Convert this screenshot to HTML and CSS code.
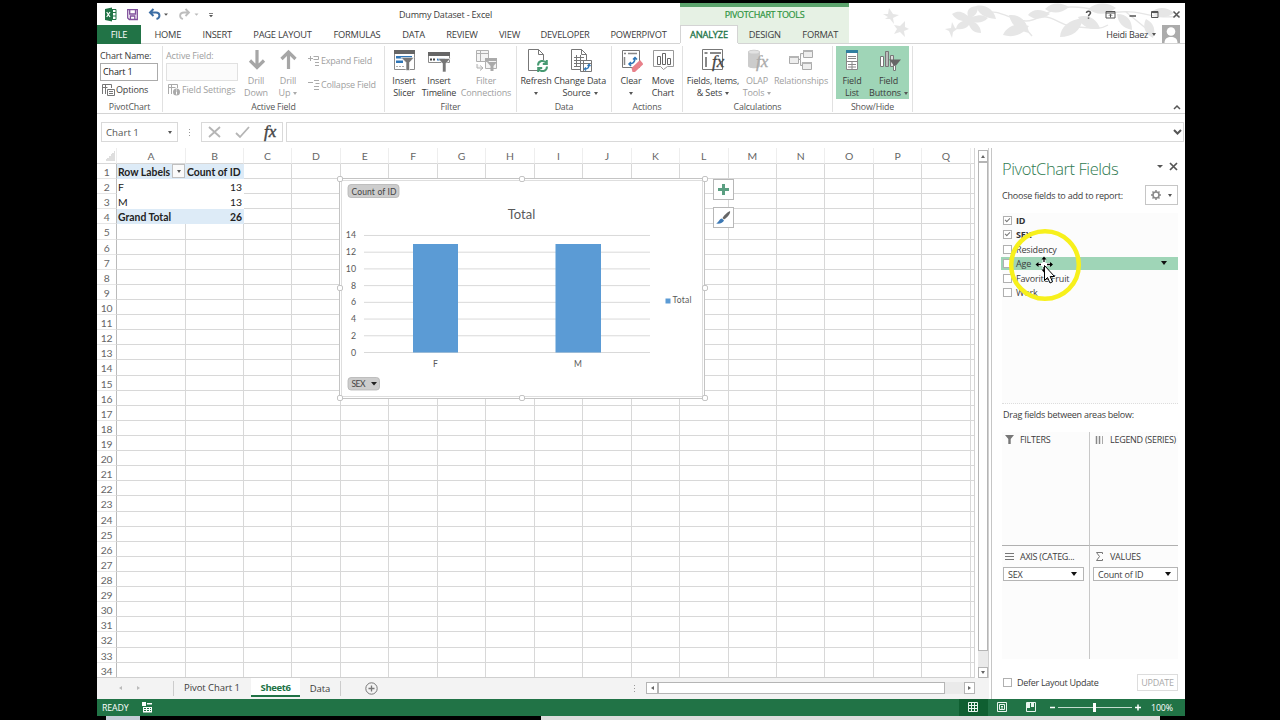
FILE: index.html
```html
<!DOCTYPE html>
<html lang="en">
    <head>
        <meta charset="utf-8">
        <title>Dummy Dataset - Excel</title>
        <link rel="stylesheet" href="styles.css">
    </head>
    <body>
        <div class="window">
            <div class="titlebar">
                <svg class="branches" width="310" height="39" viewBox="875 3 310 39">
                    <g fill="none" stroke="#e6e6e6" stroke-width="1.4">
                        <path d="M984 13c14-5 28 8 42 8s20-13 44-14 30 8 50 5 30 8 60 4M1040 17c14-2 22 10 36 10s22 4 32-2M1020 22l12 14M1126 12l22 18"/>
                    </g>
                    <g fill="#e6e6e6">
                        <path d="M883 14l5 0 1-6 4 6 6 1-6 3 1 6-4-5-5 0 3-2zM894 25l6 1 5-5 0 6 4 2-5 2 1 6-5-5-6 2 3-5zM945 29l6-1 1-6 3 6 2 1-4 3-1 6-3-7z"/>
                        <path d="M952 14c8-5 13 0 16 2-2-6 2-10 10-10 0 6-2 9-6 11 8-3 12-2 16 1-5 5-10 5-14 4 4 2 7 6 7 11-8 0-10-4-12-8-3 4-8 5-13 4 1-5 4-7 7-8-6-1-9-4-11-7z"/>
                        <path d="M976 6c10-2 18 4 20 13-11-1-17-4-20-13zM1009 15c10-1 18 5 20 18-11-2-18-8-20-18zM1003 35c4-9 14-13 26-9-6 9-16 12-26 9zM1028 15c5-7 14-6 22-1-8 6-16 6-22 1z"/>
                        <path d="M1045 9c7-7 16-7 24-2-8 7-17 7-24 2zM1060 37c1-11 9-17 23-19-2 13-11 19-23 19zM1078 17c9-3 18 1 22 11-11 2-18-1-22-11zM1088 9c9-7 19-7 28-1-9 7-19 8-28 1zM1117 14c10 0 15 6 15 16-9-2-14-7-15-16zM1146 19c8 4 10 11 7 19-8-4-11-11-7-19zM1151 12c8-6 16-5 23 1-8 6-16 5-23-1z"/>
                    </g>
                </svg>
                <div class="quick">
                    <svg width="130" height="16" viewBox="101 6 130 16">
                        <path fill="#fff" stroke="#217346" d="M109 9.5h7v10h-7M112.5 9v11M109 12.5h7M109 16h7"/>
                        <path fill="#217346" d="M105 9l7-1.5v14L105 20z"/>
                        <path fill="none" stroke="#fff" stroke-width="1.2" d="M106.7 12l3.3 5M110 12l-3.3 5"/>
                        <path fill="none" stroke="#80509c" stroke-width="1.3" d="M127.7 9.7h9.6v9.8h-8l-1.6-1.6zM129.7 10v4h5.8v-4M130.4 19v-3h4.4v3"/>
                        <path fill="none" stroke="#3c6ea5" stroke-width="2" d="M150.5 12.500h5.500c4.500 0 4.500 5.500.5 6.500M153.500 9l-3.500 3.500 3.500 3.500"/>
                        <path fill="none" stroke="#bdbdbd" stroke-width="1.8" d="M188.500 12.500h-4.500c-5 0-5 5.500-1 6.500M185.500 9l3.500 3.500-3.500 3.500"/>
                        <path fill="#555" d="M164 13.500h4l-2 2.200zM209 15h4l-2 2.200zM209 13h4v.8h-4z"/>
                        <path fill="#bbb" d="M194.500 13.500h4l-2 2.200z"/>
                    </svg>
                </div>
                <div class="doc-title">Dummy Dataset - Excel</div>
                <div class="context-title">PIVOTCHART TOOLS</div>
                <svg class="controls" width="102" height="14" viewBox="1083 8 102 14">
                    <g fill="none" stroke="#555">
                        <path stroke-width="1.5" d="M1086.500 13c0-2.500 4-2.500 4 0 0 1.300-2 1.500-2 3.200M1088.500 17.500v1.300"/>
                        <path d="M1106 11.500h9v6.500h-9zM1106 13h9M1110.500 17.500v-3M1109 15.700l1.500-1.500 1.500 1.500"/>
                        <path stroke-width="1.500" d="M1129.500 16h6.500"/>
                        <path d="M1151.500 11.500h6.500v6h-6.500zM1151.500 12.500h6.500"/>
                        <path stroke-width="1.500" d="M1173.500 11.500l6 6M1179.500 11.500l-6 6"/>
                    </g>
                </svg>
            </div>

            <div class="tabs">
                <div class="tab file">FILE</div>
                <div class="tab">HOME</div>
                <div class="tab">INSERT</div>
                <div class="tab">PAGE LAYOUT</div>
                <div class="tab">FORMULAS</div>
                <div class="tab">DATA</div>
                <div class="tab">REVIEW</div>
                <div class="tab">VIEW</div>
                <div class="tab">DEVELOPER</div>
                <div class="tab">POWERPIVOT</div>
                <div class="tab context active">ANALYZE</div>
                <div class="tab context">DESIGN</div>
                <div class="tab context">FORMAT</div>
                <div class="user">
                    <span>Heidi Baez</span>
                    <i class="caret"></i>
                    <svg width="18" height="18" viewBox="0 0 18 18">
                        <path fill="#ababab" d="M0 0h18v18H0z"/>
                        <circle cx="9" cy="6.500" r="4.300" fill="#fff"/>
                        <path fill="#fff" d="M2.500 18c0-4.500 3-6 6.500-6s6.500 1.500 6.500 6z"/>
                    </svg>
                </div>
            </div>

            <div class="ribbon">
                <div class="group pivotchart">
                    <div class="stack">
                        <span>Chart Name:</span>
                        <span class="field">Chart 1</span>
                        <span class="small-btn">
                            <svg width="13" height="12" viewBox="0 0 13 12"><path fill="none" stroke="#777" d="M.5 10V.5h9V4M.5 3.500h5M3.500.5V10M5.500 5.500h7v6h-7zM7 7.500h4M7 9.500h4"/></svg>
                            Options
                        </span>
                    </div>
                    <div class="group-name">PivotChart</div>
                </div>

                <div class="group activefield">
                    <div class="buttons">
                        <div class="stack off">
                            <span>Active Field:</span>
                            <span class="field"></span>
                            <span class="small-btn">
                                <svg width="13" height="12" viewBox="0 0 13 12"><path fill="none" stroke="#aaa" d="M.5 10V.5h9V4M.5 3.500h7M3.500.5V10"/><circle cx="8.500" cy="8" r="3.500" fill="#aaa"/><path stroke="#fff" d="M8.500 5.500v1M8.500 7.500v3"/></svg>
                                Field Settings
                            </span>
                        </div>
                        <div class="btn off">
                            <svg width="24" height="24" viewBox="0 0 24 24"><path fill="none" stroke="#a6a6a6" stroke-width="3.2" d="M13 2v17M6 12.500l7 7 7-7"/></svg>
                            <span>Drill</span><span>Down</span>
                        </div>
                        <div class="btn off">
                            <svg width="24" height="24" viewBox="0 0 24 24"><path fill="none" stroke="#a6a6a6" stroke-width="3.2" d="M12.500 21V4M5.500 11l7-7 7 7"/></svg>
                            <span>Drill</span><span>Up<i class="caret"></i></span>
                        </div>
                        <div class="lines off">
                            <span><svg width="12" height="12" viewBox="0 0 12 12"><path fill="none" stroke="#aaa" d="M0 3.500h5M2.500 1v5M5.500 1.500h5v3h-5M7 7.500h4M7 10.500h4"/></svg>Expand Field</span>
                            <span><svg width="12" height="12" viewBox="0 0 12 12"><path fill="none" stroke="#aaa" d="M0 3.500h5M6 1.500h5M7.500 4.500h4M6 7.500h5M6 10.500h5"/></svg>Collapse Field</span>
                        </div>
                    </div>
                    <div class="group-name">Active Field</div>
                </div>

                <div class="group filter">
                    <div class="buttons">
                        <div class="btn">
                            <svg width="24" height="24" viewBox="0 0 24 24"><path fill="#fff" stroke="#8a8a8a" d="M2.500 2.500h20v19h-20z"/><path fill="#666" d="M2 2h21v4H2z"/><path fill="#2e75b6" d="M4 8h16v2.500H4zM4 12.500h7V15H4z"/><path stroke="#aaa" stroke-dasharray="2 1" d="M4 18.500h8"/><path fill="#777" stroke="#fff" stroke-width=".6" d="M9 9.500h13l-4.500 5v8h-3.500v-8z"/></svg>
                            <span>Insert</span><span>Slicer</span>
                        </div>
                        <div class="btn">
                            <svg width="24" height="24" viewBox="0 0 24 24"><path fill="#fff" stroke="#8a8a8a" d="M1.500 4.500h21v10h-21z"/><path fill="#666" d="M1 4h22v4H1z"/><path stroke="#444" stroke-width="2" stroke-dasharray="2 1" d="M3 11.500h6"/><path stroke="#2e75b6" stroke-width="2" d="M10 11.500h8"/><path fill="#777" stroke="#fff" stroke-width=".6" d="M11 10.500h12.500l-4.500 5V24h-3.500v-8.500z"/></svg>
                            <span>Insert</span><span>Timeline</span>
                        </div>
                        <div class="btn off">
                            <svg width="24" height="24" viewBox="0 0 24 24"><path fill="#f4f4f4" stroke="#b0b0b0" d="M2.500 2.500h12v11h-12zM2.500 5.500h12M6.500 2.500v11M3 16v4h6M6 17.500l3 2.500-3 2.500M11.500 10.500h11v10h-11z"/><path fill="#aaa" d="M11 10h12v3H11zM13 14h10l-3.500 4v5h-3v-5z"/></svg>
                            <span>Filter</span><span>Connections</span>
                        </div>
                    </div>
                    <div class="group-name">Filter</div>
                </div>

                <div class="group data">
                    <div class="buttons">
                        <div class="btn">
                            <svg width="24" height="24" viewBox="0 0 24 24"><path fill="#fff" stroke="#777" d="M4.500 1.500h10l5 5v16h-15zM14.500 1.500v5h5"/><circle cx="18.500" cy="18" r="6" fill="#fff"/><path fill="none" stroke="#479a72" stroke-width="2" d="M14 17.500c0-5 6-6 8.500-2.500M22.800 12v4h-4M23 18.500c0 5-6 6-8.500 2.500M14.200 24v-4h4"/></svg>
                            <span>Refresh</span><span><i class="caret"></i></span>
                        </div>
                        <div class="btn">
                            <svg width="24" height="24" viewBox="0 0 24 24"><path fill="#fff" stroke="#777" d="M3.500 1.500h10l5 5v15h-15zM13.500 1.500v5h5M6 9.500h10M6 12.500h10M6 15.500h10M6 18.500h10M8.500 7v12M12.500 7v12"/><path fill="#fff" stroke="#777" d="M12.500 12.500h11v11h-11zM12.500 15.500h11M15.500 12.500v11"/><path fill="none" stroke="#2e75b6" stroke-width="1.300" d="M17 21c3 0 4-1 4-4M19.500 18l1.500-1.500 1.500 1.500M18 19.500L16.500 21l1.500 1.500"/></svg>
                            <span>Change Data</span><span>Source<i class="caret"></i></span>
                        </div>
                    </div>
                    <div class="group-name">Data</div>
                </div>

                <div class="group actions">
                    <div class="buttons">
                        <div class="btn">
                            <svg width="24" height="24" viewBox="0 0 24 24"><path fill="#fff" stroke="#777" d="M3.500 2.500h17v17h-17z"/><path fill="none" stroke="#888" stroke-width="1.500" d="M5 5.500h2M9 5.500h9M5.500 9v8"/><path fill="none" stroke="#2e75b6" stroke-width="1.500" d="M10 16c4 0 6-2 6-6M14 11.500l2-2 2 2M12 14l-2 2 2 2"/><path fill="#e8808a" d="M12.500 20l8.500-8 3.500 4-8.500 8h-2.500z"/></svg>
                            <span>Clear</span><span><i class="caret"></i></span>
                        </div>
                        <div class="btn">
                            <svg width="24" height="24" viewBox="0 0 24 24"><path fill="#fff" stroke="#999" d="M2.500 2.500h20v16h-6l-4 3-3-3h-7z"/><path fill="#fff" stroke="#666" d="M6.500 8.500h3v8h-3zM11.500 5.500h3v11h-3zM16.500 10.500h3v6h-3z"/></svg>
                            <span>Move</span><span>Chart</span>
                        </div>
                    </div>
                    <div class="group-name">Actions</div>
                </div>

                <div class="group calculations">
                    <div class="buttons">
                        <div class="btn">
                            <svg width="24" height="24" viewBox="0 0 24 24"><path fill="#fff" stroke="#777" d="M1.500 1.500h20v20h-20z"/><path fill="none" stroke="#888" stroke-width="2" d="M3.500 5h3M9 5h11M5 9v10"/><text class="fx" x="11" y="19" font-size="17">fx</text></svg>
                            <span>Fields, Items,</span><span>&amp; Sets<i class="caret"></i></span>
                        </div>
                        <div class="btn off">
                            <svg width="24" height="24" viewBox="0 0 24 24"><path fill="#ccc" d="M3 4c0-3 12-3 12 0v14c0 3-12 3-12 0z"/><ellipse cx="9" cy="4" rx="5" ry="1.500" fill="#e2e2e2"/><text class="fx" x="11" y="19" font-size="17">fx</text></svg>
                            <span>OLAP</span><span>Tools<i class="caret"></i></span>
                        </div>
                        <div class="btn off">
                            <svg width="24" height="24" viewBox="0 0 24 24"><path fill="#eee" stroke="#aaa" d="M.5 8.500h9v7h-9zM14.500 2.500h9v7h-9zM13.500 14.500h9v7h-9zM9.500 11.500h2v-6h3M11.500 11.500v6h2"/><path fill="#b5b5b5" d="M0 8h10v2H0zM14 2h10v2H14zM13 14h10v2H13z"/></svg>
                            <span>Relationships</span>
                        </div>
                    </div>
                    <div class="group-name">Calculations</div>
                </div>

                <div class="group showhide">
                    <div class="buttons">
                        <div class="btn on">
                            <svg width="24" height="24" viewBox="0 0 24 24"><path fill="#fff" stroke="#888" d="M6.500 2.500h11v19h-11zM8 8.500h8M8 10.500h8M6.500 13.500h11M12 14v7M8 16.500h8M8 19h8"/><path fill="#2f7f9f" d="M6 2h12v3H6z"/></svg>
                            <span>Field</span><span>List</span>
                        </div>
                        <div class="btn on">
                            <svg width="24" height="24" viewBox="0 0 24 24"><path fill="#fff" stroke="#777" d="M3.500 8.500h3v10h-3z"/><path fill="#bbb" stroke="#777" d="M8.500 3.500h3v15h-3z"/><path fill="#ddd" stroke="#777" d="M13.500 7.500h3v11h-3z"/><path fill="#666" d="M12 11.500h12l-5 6h-2z"/><path fill="#fff" stroke="#777" d="M16.500 17.500h2v5h-2z"/></svg>
                            <span>Field</span><span>Buttons<i class="caret"></i></span>
                        </div>
                    </div>
                    <div class="group-name">Show/Hide</div>
                </div>
                <svg class="collapse" width="8" height="6" viewBox="0 0 8 6"><path fill="none" stroke="#555" stroke-width="1.500" d="M1 5l3-3 3 3"/></svg>
            </div>

            <div class="formula-bar">
                <div class="name-box"><span>Chart 1</span><i class="caret"></i></div>
                <div class="dots"><i></i><i></i><i></i></div>
                <div class="fx-box">
                    <svg width="44" height="18" viewBox="6 0 44 18">
                        <path fill="none" stroke="#b5b5b5" stroke-width="1.800" d="M7 4l11 10M18 4L7 14M34 10l4 4 9-10"/>
                    </svg>
                    <span class="fx-btn">fx</span>
                </div>
                <div class="formula-input">
                    <svg width="9" height="6" viewBox="0 0 9 6"><path fill="none" stroke="#555" stroke-width="2" d="M1 1l3.500 3.500L8 1"/></svg>
                </div>
            </div>

            <div class="main">
                <div class="sheet-side">
                    <div class="sheet">
                        <div class="cells" id="cells"></div>
                        <svg class="chart" width="371" height="227" viewBox="337 175 371 227">
                            <path fill="#fff" stroke="#c4c4c4" d="M339.500 178.500h365v220h-365z"/>
                            <path fill="none" stroke="#dedede" d="M341.500 180.500h361v216h-361z"/>
                            <g class="chip"><rect x="348" y="184.500" width="51" height="13" rx="3"/><rect x="348" y="377.500" width="31.500" height="12.500" rx="3"/></g>
                            <text class="chart-text dark" x="351.500" y="194.500" textLength="45">Count of ID</text>
                            <text class="chart-text dark" x="351.500" y="387" textLength="14">SEX</text>
                            <path fill="#222" d="M371 382h6l-3 3.500z"/>
                            <text class="chart-title" x="521.500" y="219">Total</text>
                            <g id="plot"></g>
                            <path fill="#5b9bd5" d="M665.500 298.500h5v5h-5z"/>
                            <text class="chart-text" x="672.500" y="303" textLength="19">Total</text>
                            <g class="handles" id="handles"></g>
                        </svg>
                        <div class="chart-btns">
                            <div><svg width="13" height="13" viewBox="0 0 13 13"><path stroke="#5b9f82" stroke-width="3" d="M6.500 1v11M1 6.500h11"/></svg></div>
                            <div><svg width="15" height="15" viewBox="0 0 15 15"><path fill="#666" d="M14 1c1 2-3 7-6 8.500L6.500 8C8 5 12 2 14 1z"/><path fill="#3c78b4" d="M6 8.500l2 2C7 13 4 14 0 13.500 3 12.500 3 9 6 8.500z"/></svg></div>
                        </div>
                    </div>
                    <div class="vscroll"><span class="arrow up"></span><span class="thumb"></span><span class="track"></span><span class="arrow down"></span></div>
                    <div class="sheet-tabs">
                        <div class="nav"><i class="left"></i><i class="right"></i></div>
                        <div class="sheet-tab">Pivot Chart 1</div>
                        <div class="sheet-tab current">Sheet6</div>
                        <div class="sheet-tab last">Data</div>
                        <svg class="add" width="13" height="13" viewBox="0 0 13 13"><circle cx="6.500" cy="6.500" r="5.700" fill="none" stroke="#777"/><path stroke="#777" stroke-width="1.300" d="M6.500 3.500v6M3.500 6.500h6"/></svg>
                        <div class="dots"><i></i><i></i><i></i></div>
                        <div class="hscroll"><span class="arrow left"></span><span class="thumb"></span><span class="track"></span><span class="arrow right"></span></div>
                    </div>
                </div>

                <div class="panel">
                    <div class="panel-head">
                        <h2>PivotChart Fields</h2>
                        <i class="caret"></i>
                        <svg width="9" height="9" viewBox="0 0 9 9"><path stroke="#555" stroke-width="1.700" d="M1 1l7 7M8 1L1 8"/></svg>
                    </div>
                    <div class="choose">
                        <span>Choose fields to add to report:</span>
                        <div class="tools">
                            <svg width="10" height="10" viewBox="0 0 10 10"><circle cx="5" cy="5" r="3" fill="none" stroke="#888" stroke-width="1.500"/><path stroke="#888" stroke-width="1.500" d="M5 0v2M5 8v2M0 5h2M8 5h2M1.500 1.500l1.200 1.200M7.300 7.300l1.200 1.200M8.500 1.500L7.300 2.700M2.700 7.300L1.500 8.500"/></svg>
                            <i class="caret"></i>
                        </div>
                    </div>
                    <div class="fields">
                        <div class="item checked"><i class="box"></i>ID</div>
                        <div class="item checked"><i class="box"></i>SEX</div>
                        <div class="item"><i class="box"></i>Residency</div>
                        <div class="item hover"><i class="box"></i>Age<i class="caret"></i></div>
                        <div class="item"><i class="box"></i>Favorite Fruit</div>
                        <div class="item"><i class="box"></i>Work</div>
                    </div>
                    <div class="drag-label">Drag fields between areas below:</div>
                    <div class="areas">
                        <div class="area">
                            <h3><svg width="9" height="9" viewBox="0 0 9 9"><path fill="#777" d="M0 0h9L5.700 4v5H3.300V4z"/></svg>FILTERS</h3>
                        </div>
                        <div class="area">
                            <h3><svg width="9" height="9" viewBox="0 0 9 9"><path stroke="#888" stroke-width="1.500" d="M1.500 1v8M4.500 1v8"/><path stroke="#aaa" d="M7.500 1v8"/></svg>LEGEND (SERIES)</h3>
                        </div>
                        <div class="area">
                            <h3><svg width="9" height="9" viewBox="0 0 9 9"><path stroke="#777" d="M0 1.500h9M0 4.500h9M0 7.500h9"/></svg>AXIS (CATEG...</h3>
                            <div class="value">SEX<i class="caret"></i></div>
                        </div>
                        <div class="area">
                            <h3><svg width="9" height="9" viewBox="0 0 9 9"><path fill="none" stroke="#777" d="M7.500 2V.5h-6l3 4-3 4h6V7"/></svg>VALUES</h3>
                            <div class="value">Count of ID<i class="caret"></i></div>
                        </div>
                    </div>
                    <div class="defer">
                        <i class="box"></i><span>Defer Layout Update</span>
                        <div class="update">UPDATE</div>
                    </div>
                </div>
            </div>

            <div class="status">
                <span class="ready">READY</span>
                <svg width="11" height="11" viewBox="0 0 11 11"><path fill="#fff" d="M0 0h4v4H0zM5 1h5v1.500H5zM1 5h9v5.500H1z"/><path stroke="#217346" stroke-dasharray="2 1" d="M2 6.500h7M2 8.500h7"/></svg>
                <div class="views">
                    <div class="view selected"><svg width="11" height="11" viewBox="0 0 11 11"><path fill="none" stroke="#e8f5ee" d="M.5.5h9v9h-9zM3.500.5v9M6.500.5v9M.5 3.500h9M.5 6.500h9"/></svg></div>
                    <div class="view"><svg width="11" height="11" viewBox="0 0 11 11"><path fill="none" stroke="#e8f5ee" d="M.5.5h9v9h-9zM2.500 2.500h5v5h-5zM4 4.500h2M4 6h2"/></svg></div>
                    <div class="view"><svg width="11" height="11" viewBox="0 0 11 11"><path fill="none" stroke="#e8f5ee" d="M.5.500h9v9h-9z"/><path fill="#e8f5ee" d="M1 1h3v5H1zM5 1h3v4H5z"/></svg></div>
                </div>
                <svg class="zoom" width="91" height="11" viewBox="0 0 91 11"><path stroke="#fff" stroke-width="1.500" d="M0 5.500h5M85 5.500h6M88 2.500v6"/><path stroke="#c4dccf" d="M8 5.500h74"/><path fill="#fff" d="M43 1h3v9h-3z"/></svg>
                <span class="percent">100%</span>
            </div>
        </div>
        <div class="behind"><i></i><i></i></div>

        <svg class="pointer" width="76" height="76" viewBox="0 0 76 76">
            <circle cx="38" cy="38" r="33.800" fill="none" stroke="#f7f01c" stroke-width="4.500"/>
            <path fill="#fff" stroke="#fff" stroke-width="3" d="M37 32v11M31 37.500h13"/>
            <path fill="none" stroke="#000" stroke-width="1.300" d="M37 31v4M37 40v4M30 37.500h4M40 37.500h5"/>
            <path fill="#000" d="M34.500 32.500h5L37 29.500zM31.500 35v5l-3-2.500zM43 35v5l3-2.500zM34.500 42.500h5l-2.500 3z"/>
            <path fill="#fff" stroke="#000" d="M37.500 38.500v15l3-3 2.500 5.500 2.500-1.200-2.300-5.300h4.300z"/>
        </svg>
        <script src="script.js"></script>
    </body>
</html>
```
FILE: styles.css
```css
body {
    margin: 0;
    width: 1280px;
    height: 720px;
    overflow: hidden;
    background: #000;
    color: #3c3c3c;
    font-family: "Open Sans", "Noto Sans", sans-serif;
    font-size: 9px;
    letter-spacing: -0.15px;
    white-space: nowrap;
}

svg {
    display: block;
    flex: none;
    letter-spacing: 0;
}

h2, h3 {
    margin: 0;
    font-weight: normal;
}

.window {
    display: flex;
    flex-direction: column;
    width: 1088px;
    height: 713px;
    margin: 3px 0 0 97px;
    background: #fff;
    position: relative;
}

.caret {
    display: inline-block;
    border: 2.5px solid transparent;
    border-top: 3px solid #555;
    border-bottom: 0;
    margin-left: 3px;
    vertical-align: middle;
    flex: none;
}

.off .caret {
    border-top-color: #aaa;
}

.off {
    color: #a0a0a0;
}

.fx {
    font-family: "Liberation Serif", serif;
    font-style: italic;
    fill: #444;
    stroke: #444;
    stroke-width: 0.3px;
}

.off .fx {
    fill: #aaa;
    stroke: #aaa;
}

/* title bar */
.titlebar {
    display: grid;
    grid-template-columns: 583px 169px 1fr;
    height: 22px;
}

.titlebar > * {
    grid-row: 1;
}

.branches {
    position: absolute;
    top: 0;
    right: 0;
}

.quick {
    grid-column: 1;
    padding: 3px 0 0 4px;
}

.doc-title {
    grid-column: 1;
    padding: 6px 0 0 302px;
    line-height: 12px;
    letter-spacing: -0.18px;
}

.context-title {
    grid-column: 2;
    border-top: 4px solid #5ba36c;
    background: #e6f1e4;
    color: #2e9440;
    text-align: center;
    line-height: 16px;
    letter-spacing: -0.32px;
    -webkit-text-stroke: 0.2px #2e9440;
}

.controls {
    grid-column: 3;
    justify-self: end;
    margin-top: 5px;
    position: relative;
}

/* ribbon tabs */
.tabs {
    display: grid;
    grid-template-columns: 44px 53.5px 45.5px 85px 64px 49px 48px 47px 64px 83px 58px 53.5px 57.5px 1fr;
    height: 19px;
    font-size: 9.300px;
    letter-spacing: -0.22px;
}

.tab {
    display: flex;
    align-items: center;
    justify-content: center;
    border-bottom: 1px solid #d4d4d4;
    height: 18px;
}

.tab.file {
    background: #217346;
    color: #fff;
    border-color: #217346;
}

.tab.context {
    background: #e6f1e4;
}

.tab.active {
    background: #fff;
    color: #217346;
    box-shadow: inset 1px 1px #d4d4d4, inset -1px 0 #d4d4d4;
    border-color: #fff;
    -webkit-text-stroke: 0.3px #217346;
}

.user {
    display: flex;
    align-items: center;
    justify-content: flex-end;
    height: 18px;
    padding-right: 5px;
    border-bottom: 1px solid #d4d4d4;
    font-size: 9px;
    letter-spacing: -0.25px;
    position: relative;
}

.user .caret {
    margin: 0 6px 0 4px;
}

/* ribbon */
.ribbon {
    display: grid;
    grid-template-columns: 66px 222px 132px 95px 71px 150px 80px 1fr;
    height: 69px;
    border-bottom: 1px solid #d4d4d4;
}

.group {
    display: flex;
    flex-direction: column;
    justify-content: space-between;
    border-right: 1px solid #e1e1e1;
    margin: 2px 0 1px;
}

.group-name {
    text-align: center;
    line-height: 11px;
    height: 10px;
    color: #555;
    font-size: 8.800px;
}

.buttons {
    display: grid;
    height: 52px;
}

.filter .buttons { grid-template-columns: 34px 36px 58px; padding-left: 2px; }
.data .buttons { grid-template-columns: 34px 54px; padding-left: 2px; }
.actions .buttons { grid-template-columns: 32px 32px; padding-left: 3px; }
.calculations .buttons { grid-template-columns: 56px 32px 56px; padding-left: 2px; }
.showhide .buttons { grid-template-columns: 32px 41px; padding-left: 3px; }
.activefield .buttons { grid-template-columns: 77px 32px 32px 1fr; }

.btn {
    display: flex;
    flex-direction: column;
    align-items: center;
    padding-top: 2px;
    line-height: 12px;
}

.btn svg {
    margin-bottom: 3px;
}

.btn span {
    height: 12px;
}

.data .btn:first-child .caret,
.actions .btn:first-child .caret {
    margin-left: 0;
}

.btn.on {
    background: #9fd5b7;
}

.stack {
    display: flex;
    flex-direction: column;
    padding: 3px 4px 0 3px;
    line-height: 13px;
}

.field {
    box-sizing: border-box;
    height: 18px;
    border: 1px solid #ababab;
    margin: 1px 0;
    padding-left: 2px;
    line-height: 16px;
    color: #222;
}

.off .field {
    border-color: #e1e1e1;
    background: #fbfbfb;
    margin-right: -2px;
}

.small-btn {
    display: flex;
    align-items: center;
    gap: 1px;
    padding-left: 2px;
    height: 15px;
    letter-spacing: -0.15px;
}

.lines {
    display: flex;
    flex-direction: column;
    gap: 12px;
    padding: 9px 0 0 4px;
    line-height: 12px;
    letter-spacing: -0.2px;
}

.lines span {
    display: flex;
    gap: 1px;
}

.collapse {
    align-self: end;
    justify-self: end;
    margin: 0 4px 3px 0;
}

/* formula bar */
.formula-bar {
    display: grid;
    grid-template-columns: 77px 23px 83px 1fr;
    height: 20px;
    padding: 8px 1px 6px 4px;
}

.name-box, .fx-box, .formula-input {
    border: 1px solid #d9d9d9;
    height: 18px;
}

.name-box {
    display: flex;
    align-items: center;
    justify-content: space-between;
    padding: 0 5px 0 4px;
    font-size: 9.700px;
    line-height: 17px;
    letter-spacing: 0;
    color: #555;
}

.fx-box {
    display: flex;
    margin-right: 1px;
    padding-left: 6px;
}

.fx-btn {
    font-family: "Liberation Serif", serif;
    font-style: italic;
    font-size: 17px;
    line-height: 17px;
    letter-spacing: 0;
    color: #444;
    -webkit-text-stroke: 0.4px #444;
    margin-left: 12px;
}

.formula-input {
    margin-left: 2px;
    display: flex;
    align-items: center;
    justify-content: flex-end;
    padding-right: 1px;
}

.dots {
    display: flex;
    flex-direction: column;
    gap: 2px;
    align-items: center;
    justify-content: center;
}

.dots i {
    width: 1px;
    height: 1px;
    background: #999;
}

/* worksheet */
.main {
    display: grid;
    grid-template-columns: 894px 1fr;
    height: 551px;
}

.sheet-side {
    display: grid;
    grid-template-columns: 878px 1fr;
    grid-template-rows: 530px 21px;
}

.sheet {
    position: relative;
    overflow: hidden;
    border-right: 1px solid #d4d4d4;
    border-bottom: 1px solid #cfcfcf;
}

.cells {
    display: grid;
    grid-template-columns: 20px 69px 58px 48px 49px repeat(13, 48.450px) 4px;
    grid-template-rows: 16px repeat(34, 15.120px);
    font-family: Lato, "Open Sans", sans-serif;
    font-size: 10.400px;
    letter-spacing: 0;
    color: #222;
}

.cells div {
    box-sizing: border-box;
    border-right: 1px solid #d8d8d8;
    border-bottom: 1px solid #d8d8d8;
    line-height: 16px;
    padding: 0 1px;
    overflow: hidden;
}

.cells .head {
    text-align: center;
    color: #666;
    border-right-color: #eee;
}

.cells .corner {
    background: linear-gradient(135deg, transparent 50%, #dedede 50%) 8px 3px / 10px 10px no-repeat;
}

.cells .rownum {
    text-align: center;
    color: #666;
    letter-spacing: -0.3px;
    border-right-color: #bbb;
    border-bottom-color: #e6e6e6;
}

.cells .pivot {
    background: #ddebf7;
    border-color: #ddebf7;
    font-weight: bold;
}

.cells .label {
    display: flex;
    justify-content: space-between;
}

.cells .plain {
    border-color: #fff;
}

.cells .num {
    text-align: right;
    padding-right: 1px;
}

.filter-btn {
    display: flex;
    align-items: center;
    justify-content: center;
    width: 11px;
    height: 12px;
    border: 1px solid #c0c0c0;
    background: #fafafa;
    margin-right: -1px;
}

.filter-btn .caret {
    margin: 0;
}

.chart {
    position: absolute;
    left: 240px;
    top: 27px;
}

.chart-text {
    font-family: Lato, sans-serif;
    font-size: 8.500px;
    fill: #595959;
}

.chart-text.dark {
    fill: #444;
}

.chart-text.end {
    text-anchor: end;
    font-size: 8.800px;
}

.chart-text.mid {
    text-anchor: middle;
}

.chart-title {
    font-family: Lato, sans-serif;
    font-size: 13px;
    fill: #595959;
    text-anchor: middle;
}

.chip rect {
    fill: #cdcdcd;
    stroke: #b4b4b4;
    stroke-width: 0.8px;
}

.handles rect {
    fill: #fff;
    stroke: #c4c4c4;
}

.chart-btns {
    position: absolute;
    left: 616px;
    top: 31px;
    display: flex;
    flex-direction: column;
    gap: 7px;
}

.chart-btns div {
    display: flex;
    align-items: center;
    justify-content: center;
    width: 19px;
    height: 19px;
    border: 1px solid #b8b8b8;
    background: #fff;
}

/* scroll bars */
.vscroll {
    display: grid;
    grid-template-rows: 12px 489px 16px 11px;
    width: 10px;
    padding: 2px 0 0 3px;
    border-right: 1px solid #d0d0d0;
}

.hscroll {
    display: grid;
    grid-template-columns: 12px 287px 19px 11px;
    height: 12px;
    margin-left: 11px;
}

.thumb, .arrow {
    border: 1px solid #b5b5b5;
    background: #fff;
}

.track {
    background: #eaeaea;
}

.arrow {
    display: flex;
    align-items: center;
    justify-content: center;
}

.arrow::after, .nav i {
    content: "";
    border: 2.5px solid transparent;
}

.arrow.up::after { border-bottom: 3px solid #666; border-top: 0; }
.arrow.down::after { border-top: 3px solid #666; border-bottom: 0; }
.arrow.left::after { border-right: 3px solid #666; border-left: 0; }
.arrow.right::after { border-left: 3px solid #666; border-right: 0; }

/* sheet tabs */
.sheet-tabs {
    grid-column: 1 / 3;
    display: flex;
    align-items: center;
    background: #f3f3f3;
    font-size: 9.500px;
    padding-bottom: 1px;
    margin-right: 2px;
}

.nav {
    display: flex;
    justify-content: space-between;
    width: 25px;
    padding: 0 31px 0 20px;
    border-right: 1px solid #ccc;
    height: 15px;
    align-items: center;
    margin-right: -1px;
}

.nav .left { border-right: 3px solid #bbb; }
.nav .right { border-left: 3px solid #bbb; }

.sheet-tab {
    width: 78px;
    line-height: 18px;
    text-align: center;
    letter-spacing: -0.05px;
}

.sheet-tab.current {
    width: 49px;
    background: #fff;
    color: #217346;
    font-weight: bold;
    letter-spacing: -0.4px;
    border-bottom: 2px solid #217346;
    line-height: 19px;
    height: 17px;
    align-self: flex-start;
}

.sheet-tab.last {
    width: 40px;
    border-right: 1px solid #ccc;
    line-height: 15px;
}

.add {
    margin: 0 256px 0 24px;
}

/* field list */
.panel {
    display: flex;
    flex-direction: column;
    border-left: 1px solid #c6c6c6;
    padding: 8px 7px 0 10px;
}

.panel-head {
    display: flex;
    align-items: flex-start;
    height: 26px;
}

.panel-head h2 {
    flex: 1;
    color: #2f7a50;
    font-size: 16.500px;
    font-weight: 300;
    line-height: 26px;
    letter-spacing: -0.42px;
}

.panel-head .caret {
    margin: 9px 6px 0 0;
    border-width: 3.500px 3px 0;
}

.panel-head svg {
    margin-top: 6px;
}

.choose {
    display: flex;
    align-items: center;
    justify-content: space-between;
    height: 26px;
    padding-bottom: 5px;
    letter-spacing: -0.22px;
}

.tools {
    display: flex;
    align-items: center;
    justify-content: center;
    gap: 4px;
    width: 31px;
    height: 18px;
    border: 1px solid #c6c6c6;
}

.fields {
    height: 191px;
    background: #fcfcfc;
    border-bottom: 1px dotted #ddd;
    box-sizing: border-box;
}

.item {
    display: flex;
    align-items: center;
    height: 14.500px;
    gap: 4px;
    padding-left: 1px;
}

.item.checked {
    font-weight: bold;
    color: #333;
}

.item.hover {
    background: #9fd5b7;
    margin-left: -1px;
    padding: 0 11px 0 2px;
    height: 13.500px;
    margin-bottom: 1px;
}

.item.hover .caret {
    margin-left: auto;
    border-width: 4px 3.500px 0;
    border-top-color: #111;
}

.box {
    box-sizing: border-box;
    width: 9px;
    height: 9px;
    border: 1px solid #b0b0b0;
    background: #fff;
    flex: none;
}

.checked .box::after {
    content: "";
    display: block;
    width: 4px;
    height: 2px;
    margin: 1px 0 0 1px;
    border: solid #777;
    border-width: 0 0 1px 1px;
    transform: rotate(-45deg);
}

.drag-label {
    line-height: 21px;
    height: 28px;
    padding-left: 1px;
    letter-spacing: -0.25px;
}

.areas {
    display: grid;
    grid-template-columns: 88px 88px;
    grid-template-rows: 114px 113px;
}

.area {
    background: #fcfcfc;
    padding: 0 5px 0 1px;
}

.area:nth-child(odd) {
    border-right: 1px solid #c8c8c8;
}

.area:nth-child(even) {
    padding: 0 0 0 3px;
}

.area:nth-child(-n+2) {
    border-bottom: 1px solid #b0b0b0;
}

.area h3 {
    display: flex;
    align-items: center;
    gap: 6px;
    padding-left: 2px;
    height: 14px;
    font-size: 9px;
    letter-spacing: -0.28px;
}

.area:nth-child(n+3) h3 {
    height: 21px;
}

.value {
    display: flex;
    align-items: center;
    justify-content: space-between;
    height: 12px;
    border: 1px solid #b5b5b5;
    background: #fff;
    padding: 0 6px 0 4px;
    letter-spacing: -0.2px;
}

.value .caret {
    border-width: 4px 3.500px 0;
    border-top-color: #111;
}

.defer {
    display: flex;
    align-items: center;
    gap: 5px;
    padding: 15px 0 0 1px;
    letter-spacing: -0.3px;
}

.update {
    margin-left: auto;
    border: 1px solid #ddd;
    color: #aaa;
    width: 39px;
    text-align: center;
    line-height: 15px;
}

/* status bar */
.status {
    display: flex;
    align-items: center;
    height: 17px;
    background: #217346;
    color: #fff;
    font-size: 8.800px;
}

.ready {
    width: 40px;
    padding-left: 5px;
}

.views {
    display: flex;
    margin-left: auto;
}

.view {
    display: flex;
    align-items: center;
    justify-content: center;
    width: 29px;
    height: 17px;
}

.view.selected {
    background: #0f5f31;
}

.zoom {
    margin-left: 4px;
}

.percent {
    width: 22px;
    margin: 0 12px 0 10px;
}

.behind {
    display: flex;
    gap: 401px;
    padding-left: 106px;
}

.behind i {
    width: 34px;
    height: 4px;
    background: #c3ccd6;
    flex: none;
}

.behind i + i {
    width: 619px;
    background: #dcdcdc;
}

.pointer {
    position: absolute;
    left: 1007px;
    top: 227px;
}
```
FILE: script.js
```javascript
var letters = "ABCDEFGHIJKLMNOPQ".split("");
var pivot = [
    ["Row Labels", "Count of ID"],
    ["F", "13"],
    ["M", "13"],
    ["Grand Total", "26"]
];

function addCell(parent, cls, text) {
    var div = document.createElement("div");
    div.className = cls;
    div.textContent = text;
    parent.appendChild(div);
    return div;
}

function buildCells() {
    var cells = document.getElementById("cells");

    addCell(cells, "head corner", "");
    for (var c = 0; c < letters.length; c++) {
        addCell(cells, "head", letters[c]);
    }
    addCell(cells, "head", "");

    for (var r = 1; r <= 34; r++) {
        addCell(cells, "rownum", r);
        for (c = 0; c <= letters.length; c++) {
            var cls = "";
            var text = "";
            if (r <= 4 && c < 2) {
                text = pivot[r - 1][c];
                cls = (r == 1 || r == 4) ? "pivot" : "plain";
                if (c == 1 && r > 1) {
                    cls += " num";
                }
            }
            var cell = addCell(cells, cls, text);
            if (r == 1 && c == 0) {
                cell.className += " label";
                cell.insertAdjacentHTML("beforeend", '<span class="filter-btn"><i class="caret"></i></span>');
            }
        }
    }
}

function buildPlot() {
    var out = "";
    for (var v = 0; v <= 14; v += 2) {
        var y = 352.5 - v * 8.36;
        out += '<path stroke="#d9d9d9" d="M364 ' + y + 'h286"/>';
        out += '<text class="chart-text end" x="356" y="' + (y + 3) + '">' + v + '</text>';
    }
    out += '<path fill="#5b9bd5" d="M413 244h45v108.500h-45zM555.500 244h45.500v108.500h-45.500z"/>';
    out += '<text class="chart-text mid" x="435.500" y="367">F</text>';
    out += '<text class="chart-text mid" x="578" y="367">M</text>';
    document.getElementById("plot").innerHTML = out;
}

function buildHandles() {
    var out = "";
    [340, 522, 705].forEach(function (x) {
        [179, 288, 398].forEach(function (y) {
            if (x != 522 || y != 288) {
                out += '<rect x="' + (x - 2.5) + '" y="' + (y - 2.5) + '" width="5" height="5" rx="1.5"/>';
            }
        });
    });
    document.getElementById("handles").innerHTML = out;
}

buildCells();
buildPlot();
buildHandles();
```
